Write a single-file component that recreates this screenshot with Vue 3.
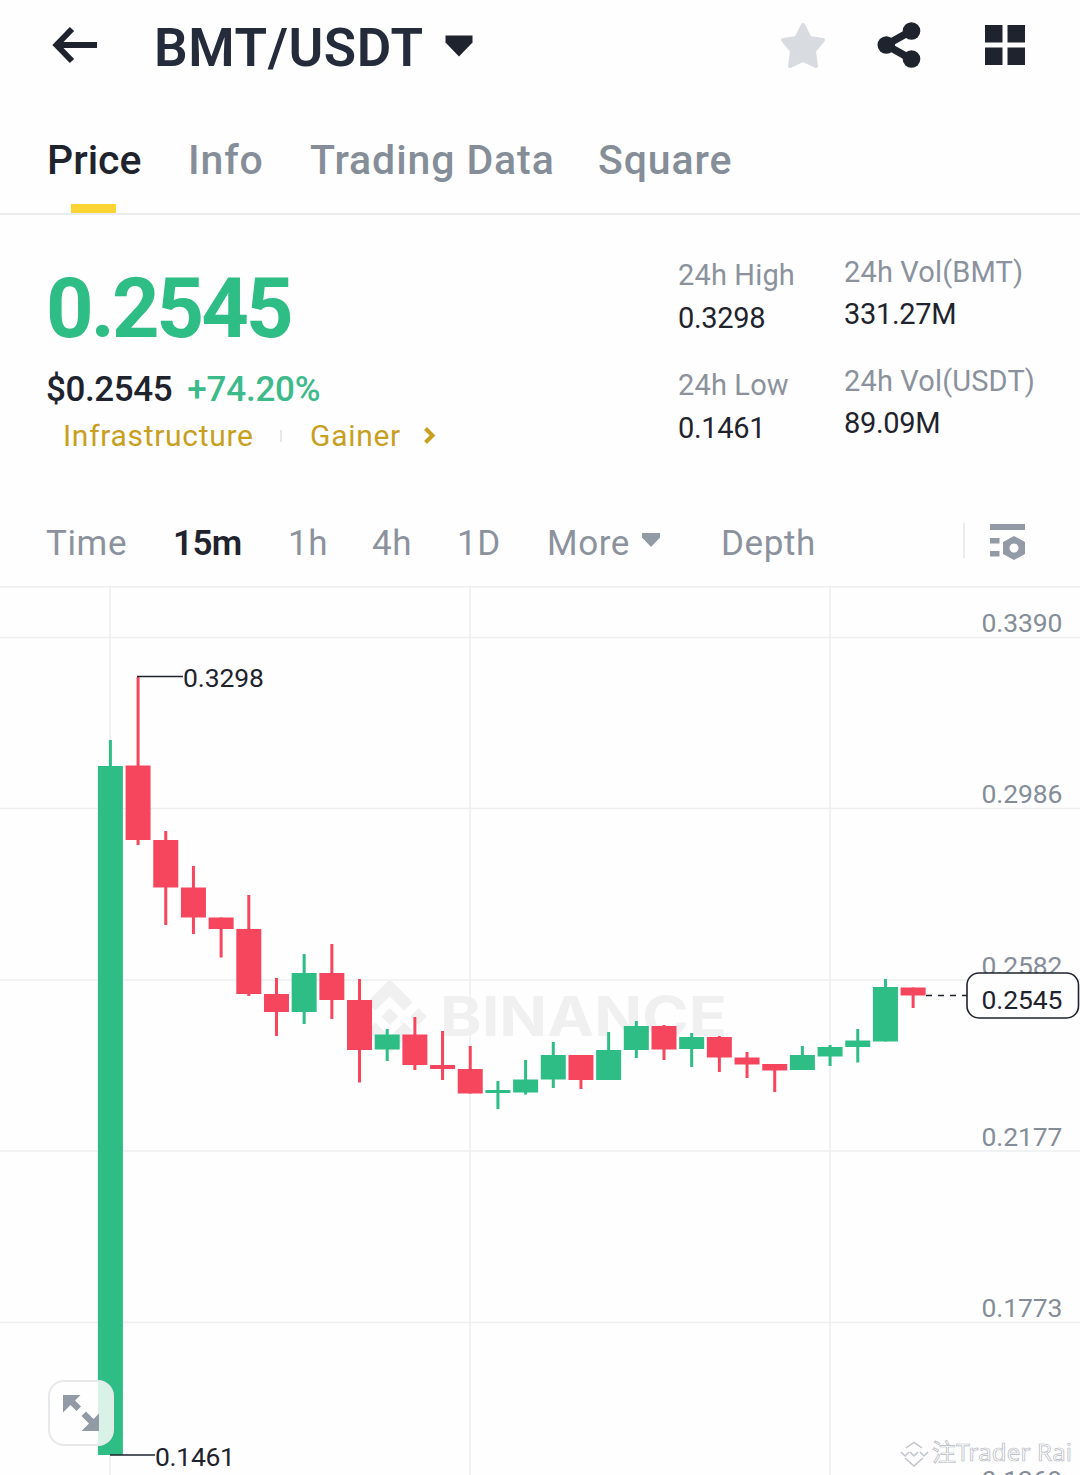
<script setup>
import { ref } from "vue";

const tabs = ["Price", "Info", "Trading Data", "Square"];
const activeTab = ref("Price");

const intervals = ["Time", "15m", "1h", "4h", "1D"];
const activeInterval = ref("15m");

// chart geometry
const step = 27.68;
const firstX = 110.4;
const bodyWidth = 25;

const gridX = [110, 470, 830];
const axis = [
  { y: 637.5, price: "0.3390" },
  { y: 808.5, price: "0.2986" },
  { y: 980, price: "0.2582" },
  { y: 1151, price: "0.2177" },
  { y: 1322.5, price: "0.1773" },
  { y: 1494, price: "0.1369" },
];

// [direction, high, body top, body bottom, low]
const rows = [
  ["up", 740, 766, 1455, 1455],
  ["down", 677, 765.5, 840, 845],
  ["down", 831, 840, 887.5, 925],
  ["down", 866, 887.5, 917.5, 934],
  ["down", 917.5, 917.5, 929, 957.5],
  ["down", 895, 929, 994, 996],
  ["down", 978, 994, 1012, 1036],
  ["up", 954, 973, 1012, 1024],
  ["down", 944, 973, 1000, 1019],
  ["down", 979, 1000, 1050, 1082.5],
  ["up", 1029, 1034.5, 1049.5, 1061],
  ["down", 1017, 1034.5, 1065, 1070],
  ["down", 1031, 1065, 1069, 1080],
  ["down", 1046, 1069, 1093.5, 1093.5],
  ["up", 1081, 1090, 1093, 1109],
  ["up", 1060, 1079.5, 1092.5, 1094.5],
  ["up", 1042, 1055, 1079.5, 1088],
  ["down", 1055, 1055, 1080, 1089],
  ["up", 1032, 1050, 1080, 1080],
  ["up", 1021, 1026, 1050, 1058],
  ["down", 1025, 1026, 1049.5, 1060],
  ["up", 1033, 1037, 1049, 1067],
  ["down", 1036, 1037, 1057.5, 1072],
  ["down", 1052, 1057.5, 1064.5, 1078],
  ["down", 1064, 1064, 1070.5, 1092],
  ["up", 1046, 1055, 1070, 1070],
  ["up", 1045, 1047, 1056.5, 1066],
  ["up", 1029, 1040.5, 1047, 1062.5],
  ["up", 979, 987, 1041.5, 1041.5],
  ["down", 987.5, 987.5, 995.5, 1008],
];

const candles = rows.map(([dir, high, top, bottom, low], i) => ({
  dir,
  high,
  top,
  bottom,
  low,
  x: firstX + i * step,
}));
</script>

<template>
  <div class="page">
    <header class="header">
      <svg class="back" width="46" height="38" viewBox="0 0 46 38">
        <path d="M20 3 L4.5 19 L20 35 M4 19 H45" fill="none" stroke="#1e232d" stroke-width="6" />
      </svg>
      <h1 class="pair">BMT/USDT</h1>
      <svg class="caret" width="28" height="22" viewBox="0 0 28 22">
        <path d="M0.5 0.5 H27.5 V7.5 L14 21.5 L0.5 7.5 Z" fill="#1e232d" />
      </svg>
      <div class="actions">
        <svg width="46" height="48" viewBox="0 0 46 48">
          <path
            d="M23 4 L29.5 17 L43 19 L34 30 L36 45 L23 39 L10 45 L12 30 L3 19 L16.5 17 Z"
            fill="#d8dbe0"
            stroke="#d8dbe0"
            stroke-width="4"
            stroke-linejoin="round"
          />
        </svg>
        <svg width="44" height="46" viewBox="0 0 44 46">
          <path d="M34 9 L9 23 L34 37" fill="none" stroke="#1e232d" stroke-width="7.5" />
          <circle cx="34.5" cy="9" r="8.8" fill="#1e232d" />
          <circle cx="9.3" cy="23" r="8.8" fill="#1e232d" />
          <circle cx="34.5" cy="37" r="8.8" fill="#1e232d" />
        </svg>
        <svg width="40" height="40" viewBox="0 0 40 40">
          <path d="M0 0 H17.5 V17.5 H0 Z M22.5 0 H40 V17.5 H22.5 Z M0 22.5 H17.5 V40 H0 Z M22.5 22.5 H40 V40 H22.5 Z" fill="#1e232d" />
        </svg>
      </div>
    </header>

    <nav class="tabs">
      <button
        v-for="tab in tabs"
        :key="tab"
        class="tab"
        :class="{ active: tab === activeTab }"
        @click="activeTab = tab"
      >
        <span>{{ tab }}</span>
      </button>
    </nav>

    <section class="summary">
      <div class="quote">
        <div class="last">0.2545</div>
        <div class="sub">
          <span class="fiat">$0.2545</span>
          <span class="change">+74.20%</span>
        </div>
        <div class="tags">
          <span class="tag-infra">Infrastructure</span>
          <i class="tag-divider"></i>
          <span class="tag-gainer">Gainer</span>
          <svg width="12" height="18" viewBox="0 0 12 18">
            <path d="M1.5 1.5 L8.5 8.5 L1.5 15.5" fill="none" stroke="#c99f1f" stroke-width="4" />
          </svg>
        </div>
      </div>
      <div class="stats stats-range">
        <div class="label">24h High</div>
        <div class="value">0.3298</div>
        <div class="label">24h Low</div>
        <div class="value">0.1461</div>
      </div>
      <div class="stats stats-volume">
        <div class="label">24h Vol(BMT)</div>
        <div class="value">331.27M</div>
        <div class="label">24h Vol(USDT)</div>
        <div class="value">89.09M</div>
      </div>
    </section>

    <nav class="intervals">
      <button
        v-for="item in intervals"
        :key="item"
        class="interval"
        :class="{ active: item === activeInterval }"
        @click="activeInterval = item"
      >
        {{ item }}
      </button>
      <button class="interval more">
        <span>More</span>
        <svg width="18" height="14" viewBox="0 0 18 14">
          <path d="M0 0 H18 V4.5 L9 14 L0 4.5 Z" fill="#929aa5" />
        </svg>
      </button>
      <button class="interval">Depth</button>
      <i class="bar-divider"></i>
      <svg class="settings" width="36" height="38" viewBox="0 0 36 38">
        <path d="M0 1 H35 V7 H0 Z M0 15 H9.5 V20.5 H0 Z M0 28 H9.5 V33.5 H0 Z" fill="#929aa5" />
        <path
          fill-rule="evenodd"
          d="M24 13 L35 19 V31 L24 37 L13 31 V19 Z M24 20.5 a4.5 4.5 0 1 0 0.01 0 Z"
          fill="#929aa5"
        />
      </svg>
    </nav>

    <main class="chart">
      <svg class="plot" width="1080" height="889" viewBox="0 586 1080 889">
        <g class="grid">
          <line v-for="x in gridX" :key="x" :x1="x" :x2="x" y1="586" y2="1475" />
          <line x1="0" x2="1080" y1="586.8" y2="586.8" />
          <line v-for="a in axis" :key="a.y" x1="0" x2="1080" :y1="a.y" :y2="a.y" />
        </g>

        <g class="watermark">
          <path
            transform="translate(352.8 979.5) scale(0.585)"
            d="M38.73 53.2 L63.3 28.62 L87.9 53.21 L102.2 38.9 L63.3 0 L24.42 38.9 Z M0 63.31 L14.3 49 L28.61 63.3 L14.3 77.62 Z M38.73 73.41 L63.3 98 L87.89 73.4 L102.21 87.7 L63.3 126.6 L24.4 87.72 Z M98 63.31 L112.3 49 L126.62 63.3 L112.31 77.62 Z M77.83 63.3 L63.3 48.78 L48.78 63.3 L63.31 77.8 Z"
          />
          <text x="440" y="1036" textLength="287" lengthAdjust="spacingAndGlyphs">BINANCE</text>
        </g>

        <g v-for="c in candles" :key="c.x" :class="c.dir">
          <rect :x="c.x - 1.5" :y="c.high" width="3" :height="c.low - c.high" />
          <rect :x="c.x - bodyWidth / 2" :y="c.top" :width="bodyWidth" :height="c.bottom - c.top" />
        </g>

        <g class="axis">
          <text v-for="a in axis" :key="a.price" x="981.5" :y="a.y - 5.5" textLength="81">{{ a.price }}</text>
        </g>

        <g class="marks">
          <line x1="137" x2="183" y1="676.5" y2="676.5" />
          <text x="183" y="687" textLength="81">0.3298</text>
          <line x1="110" x2="155" y1="1455" y2="1455" />
          <text x="155" y="1466" textLength="80">0.1461</text>
          <line x1="926" x2="967" y1="995.5" y2="995.5" stroke-dasharray="6 6" />
          <rect x="967" y="973" width="111.5" height="45" rx="12" />
          <text x="981.5" y="1009" textLength="81">0.2545</text>
        </g>

        <g class="credit">
          <path d="M906 1448 L914 1442.5 L922 1448 M901 1452 L905 1456 L909 1452 M910 1452 L914 1456 L918 1452 M920 1452 L924 1456 L928 1452 M905 1458 L914 1466 L923 1458" />
          <text x="932" y="1461" textLength="140">注Trader Rai</text>
        </g>
      </svg>

      <button class="expand">
        <svg width="38" height="38" viewBox="0 0 38 38">
          <path
            d="M1 1 H18.5 L13 6.5 L19 12.5 L14.5 17 L8.5 11 L1 18.5 Z M37 37 V19.5 L31.5 25 L24 17.5 L19.5 22 L27 29.5 L19.5 37 Z"
            fill="#929aa5"
          />
        </svg>
      </button>
    </main>
  </div>
</template>

<style>
body {
  margin: 0;
  background: #fefefe;
}
</style>

<style scoped>
.page {
  width: 1080px;
  height: 1475px;
  overflow: hidden;
  background: #fefefe;
  color: #1e232d;
  font-family: Roboto, "Noto Sans CJK SC", sans-serif;
}

button {
  padding: 0;
  border: none;
  background: none;
  font: inherit;
  color: inherit;
  text-align: left;
  white-space: nowrap;
}

svg {
  display: block;
  flex: none;
}

.header {
  display: flex;
  align-items: center;
  height: 90px;
  padding: 0 55px 0 52px;
}

.pair {
  width: 290px;
  margin: 6px 0 0 56px;
  font-size: 53px;
  line-height: 60px;
  font-weight: 600;
  letter-spacing: 0.6px;
  color: #242b3a;
  white-space: nowrap;
}

.caret {
  margin: 1px 0 0 1px;
}

.actions {
  display: flex;
  align-items: center;
  margin-left: auto;
}

.actions svg:nth-child(1) {
  margin-right: 51px;
}

.actions svg:nth-child(2) {
  margin-right: 64px;
}

.tabs {
  display: grid;
  grid-template-columns: 141px 122px 288px 200px;
  box-sizing: border-box;
  height: 125px;
  padding-left: 47px;
  border-bottom: 2px solid #eaebed;
}

.tab {
  position: relative;
  font-size: 41px;
  font-weight: 500;
  letter-spacing: 0.9px;
  color: #858d99;
}

.tab span {
  display: inline-block;
  margin-top: 16px;
}

.tab.active {
  letter-spacing: 0;
  color: #1e232d;
}

.tab.active::after {
  content: "";
  position: absolute;
  left: 24px;
  bottom: 0;
  width: 45px;
  height: 9px;
  background: #fcd535;
}

.summary {
  display: flex;
  height: 285px;
}

.quote {
  width: 631px;
  padding: 49px 0 0 46px;
  box-sizing: border-box;
  margin-right: 47px;
}

.last {
  font-size: 83px;
  line-height: 90px;
  font-weight: 700;
  letter-spacing: -2.9px;
  color: #2ebd85;
}

.sub {
  display: flex;
  gap: 15px;
  margin-top: 16px;
  font-size: 35px;
  line-height: 40px;
  font-weight: 500;
  letter-spacing: -0.4px;
}

.change {
  letter-spacing: -0.2px;
  color: #3dba8a;
}

.tags {
  display: flex;
  align-items: center;
  margin: 8px 0 0 17px;
  font-size: 30px;
  line-height: 36px;
  letter-spacing: 0.7px;
  color: #c99f1f;
}

.tag-infra {
  width: 217px;
}

.tag-divider {
  width: 2px;
  height: 12px;
  margin-right: 28px;
  background: #e6e8ea;
}

.tag-gainer {
  width: 114px;
}

.stats {
  font-size: 29px;
  line-height: 36px;
}

.stats-range {
  width: 166px;
  padding-top: 42px;
}

.stats-volume {
  padding-top: 39px;
}

.stats .label {
  margin-bottom: 7px;
  letter-spacing: 0.15px;
  color: #8b929d;
}

.stats .value {
  margin-bottom: 31px;
  letter-spacing: -0.3px;
}

.stats-volume .value {
  margin-top: -1px;
}

.intervals {
  display: grid;
  grid-template-columns: 127px 115px 84px 85px 90px 174px 242px 27px auto;
  align-items: center;
  height: 86px;
  padding-left: 46px;
}

.interval {
  font-size: 35px;
  line-height: 42px;
  letter-spacing: 0.6px;
  padding-top: 2px;
  color: #8b929d;
}

.interval.active {
  font-weight: 600;
  letter-spacing: -0.6px;
  color: #1e232d;
}

.more {
  display: flex;
  align-items: center;
  gap: 12px;
}

.more svg {
  margin-bottom: 8px;
}

.bar-divider {
  width: 2px;
  height: 35px;
  margin-bottom: 5px;
  background: #eaebed;
}

.settings {
  margin-bottom: 2px;
}

.chart {
  position: relative;
  box-sizing: border-box;
  height: 889px;
}

.grid line {
  stroke: #edeef0;
  stroke-width: 1.6;
}

.watermark {
  fill: #f0f0f1;
}

.watermark text {
  font-family: Inter, sans-serif;
  font-size: 55px;
  font-weight: 700;
}

.up {
  fill: #2ebd85;
}

.down {
  fill: #f6465d;
}

.axis text,
.marks text {
  font-size: 26.5px;
}

.axis text {
  fill: #858d99;
}

.marks text {
  fill: #1e232d;
}

.marks line {
  stroke: #1e232d;
  stroke-width: 1.6;
}

.marks rect {
  fill: #fefefe;
  stroke: #1e232d;
  stroke-width: 1.6;
}

.credit path {
  fill: none;
  stroke: #bfc3c9;
  stroke-width: 1.5;
}

.credit text {
  fill: #fefefe;
  stroke: #b4b8be;
  stroke-width: 0.7;
  font-family: "Noto Sans", "Noto Sans CJK SC", sans-serif;
  font-size: 24px;
}

.expand {
  position: absolute;
  left: 48px;
  top: 794px;
  display: flex;
  align-items: center;
  justify-content: center;
  box-sizing: border-box;
  width: 66px;
  height: 66px;
  border: 2px solid #e6e8ea;
  border-radius: 16px;
  background: rgba(254, 254, 254, 0.82);
}
</style>
